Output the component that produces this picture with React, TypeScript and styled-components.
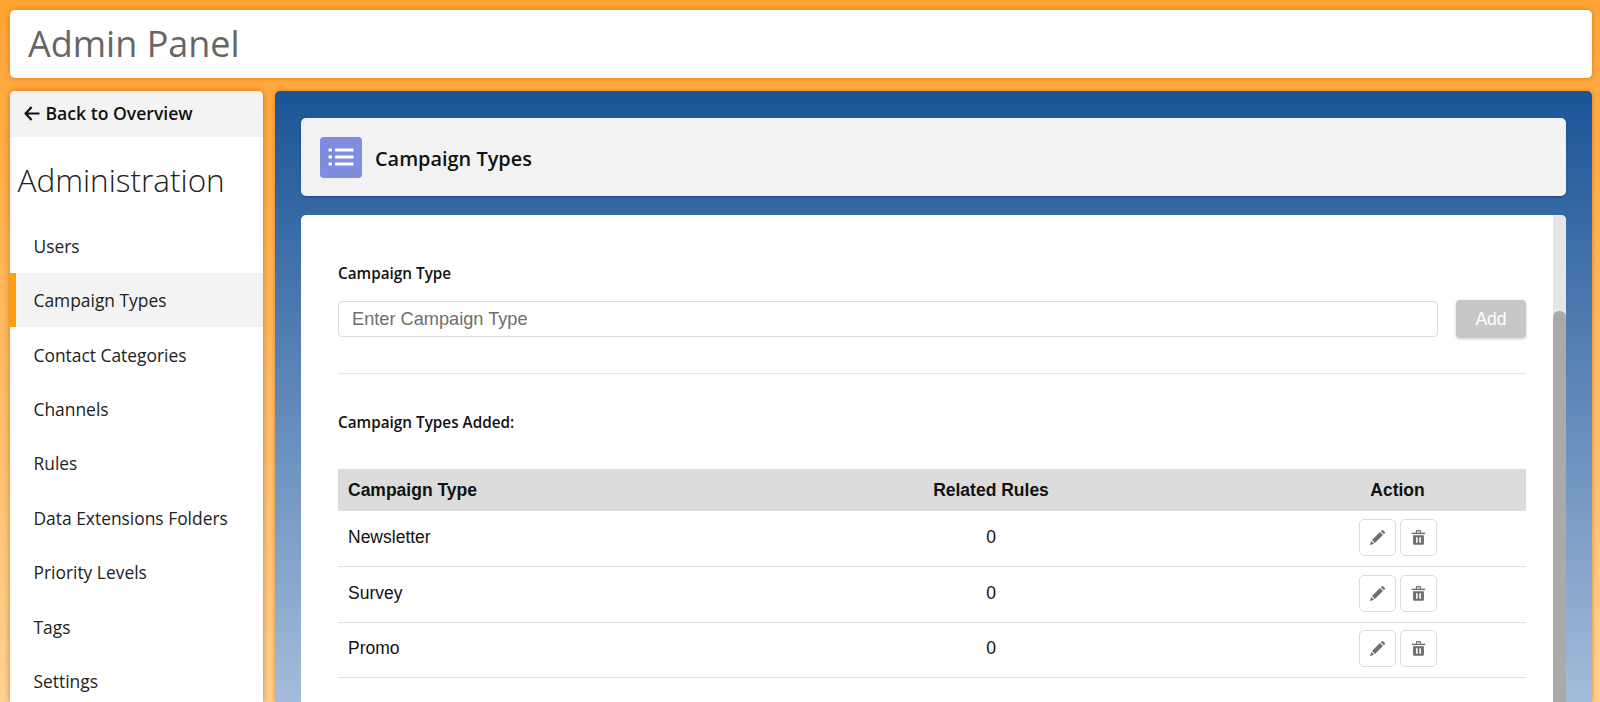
import React from 'react';
import styled, { createGlobalStyle } from 'styled-components';

const navItems = [
    'Users',
    'Campaign Types',
    'Contact Categories',
    'Channels',
    'Rules',
    'Data Extensions Folders',
    'Priority Levels',
    'Tags',
    'Settings',
];

const campaignTypes = ['Newsletter', 'Survey', 'Promo'];

const PencilIcon = () => (
    <svg width="17" height="17" viewBox="0 0 16 16" fill="#706e6b">
        <path d="M10.3 2.9 L13.1 5.7 L5.6 13.2 L2.8 10.4 Z" />
        <path d="M11.1 2.1 L12.1 1.1 Q12.7 0.7 13.2 1.1 L14.9 2.8 Q15.3 3.3 14.9 3.9 L13.9 4.9 Z" />
        <path d="M2.2 11.2 L4.8 13.8 L1.2 15 Q0.8 15 1 14.6 Z" />
    </svg>
);

const TrashIcon = () => (
    <svg width="17" height="17" viewBox="0 0 16 16" fill="#706e6b">
        <path d="M1.7 3.4 H14.3 V4.8 H1.7 Z" />
        <path d="M5.6 3.6 V1.8 Q5.6 0.9 6.6 0.9 H9.4 Q10.4 0.9 10.4 1.8 V3.6 H9.2 V2.1 H6.8 V3.6 Z" />
        <path
            fillRule="evenodd"
            d="M2.9 5.9 H13.1 V13.6 Q13.1 14.9 11.9 14.9 H4.1 Q2.9 14.9 2.9 13.6 Z M5.7 7.8 V13 H7.2 V7.8 Z M8.8 7.8 V13 H10.3 V7.8 Z"
        />
    </svg>
);

const ListIcon = () => (
    <svg width="26" height="20" viewBox="0 0 26 20" fill="#fff">
        <rect x="0.5" y="1.5" width="3.4" height="3" rx="0.8" />
        <rect x="0.5" y="8.5" width="3.4" height="3" rx="0.8" />
        <rect x="0.5" y="15.5" width="3.4" height="3" rx="0.8" />
        <rect x="7" y="1.5" width="18.5" height="3" rx="0.8" />
        <rect x="7" y="8.5" width="18.5" height="3" rx="0.8" />
        <rect x="7" y="15.5" width="18.5" height="3" rx="0.8" />
    </svg>
);

export default function App() {
    return (
        <>
            <GlobalStyle />
            <Page>
                <Header>
                    <AppTitle>Admin Panel</AppTitle>
                </Header>
                <Body>
                    <Sidebar>
                        <BackLink>
                            <BackArrow width="16" height="15" viewBox="0 0 16 15">
                                <path d="M7.6 1 L1.6 7.5 L7.6 14 M1.8 7.5 H15.5" fill="none" stroke="#111" strokeWidth="2.2" />
                            </BackArrow>
                            Back to Overview
                        </BackLink>
                        <SideTitle>Administration</SideTitle>
                        <Nav>
                            {navItems.map((item) => (
                                <NavItem key={item} $active={item === 'Campaign Types'}>
                                    {item}
                                </NavItem>
                            ))}
                        </Nav>
                    </Sidebar>
                    <Main>
                        <PageHead>
                            <IconTile>
                                <ListIcon />
                            </IconTile>
                            <PageTitle>Campaign Types</PageTitle>
                        </PageHead>
                        <Card>
                            <CardBody>
                                <FieldLabel>Campaign Type</FieldLabel>
                                <FieldRow>
                                    <TextInput placeholder="Enter Campaign Type" />
                                    <AddButton disabled>Add</AddButton>
                                </FieldRow>
                                <Divider />
                                <ListLabel>Campaign Types Added:</ListLabel>
                                <Table>
                                    <colgroup>
                                        <col width="375" />
                                        <col width="556" />
                                        <col width="257" />
                                    </colgroup>
                                    <thead>
                                        <tr>
                                            <HeadCell $align="left">Campaign Type</HeadCell>
                                            <HeadCell $align="center">Related Rules</HeadCell>
                                            <HeadCell $align="center">Action</HeadCell>
                                        </tr>
                                    </thead>
                                    <tbody>
                                        {campaignTypes.map((name) => (
                                            <tr key={name}>
                                                <Cell $align="left">{name}</Cell>
                                                <Cell $align="center">0</Cell>
                                                <Cell $align="center">
                                                    <Actions>
                                                        <IconButton aria-label="Edit">
                                                            <PencilIcon />
                                                        </IconButton>
                                                        <IconButton aria-label="Delete">
                                                            <TrashIcon />
                                                        </IconButton>
                                                    </Actions>
                                                </Cell>
                                            </tr>
                                        ))}
                                    </tbody>
                                </Table>
                            </CardBody>
                            <ScrollTrack>
                                <ScrollThumb />
                            </ScrollTrack>
                        </Card>
                    </Main>
                </Body>
            </Page>
        </>
    );
}

const GlobalStyle = createGlobalStyle`
    html, body {
        margin: 0;
        height: 100%;
        overflow: hidden;
    }

    * {
        box-sizing: border-box;
    }
`;

const Page = styled.div`
    background: linear-gradient(#ffa433, #ffd292);
    display: flex;
    flex-direction: column;
    font-family: 'Open Sans', sans-serif;
    gap: 13px;
    height: 702px;
    overflow: hidden;
    padding: 10px 8px 0 9.5px;
    width: 1600px;
`;

const Header = styled.header`
    align-items: center;
    background: #fff;
    border-radius: 5px;
    box-shadow: 0 0 5px rgba(190, 90, 0, 0.6);
    display: flex;
    flex: 0 0 68px;
    padding: 0 0 1px 18.5px;
`;

const AppTitle = styled.h1`
    color: #666;
    font-size: 36px;
    font-weight: 400;
    margin: 0;
`;

const Body = styled.div`
    display: flex;
    flex: 1;
    gap: 12px;
    min-height: 0;
`;

const Sidebar = styled.aside`
    background: #fff;
    border-radius: 5px 5px 0 0;
    box-shadow: 0 0 6px rgba(190, 90, 0, 0.7);
    display: flex;
    flex: 0 0 253.5px;
    flex-direction: column;
`;

const BackLink = styled.div`
    align-items: center;
    background: #f3f3f3;
    border-radius: 5px 5px 0 0;
    color: #111;
    display: flex;
    flex: 0 0 46px;
    font-size: 17.6px;
    font-weight: 600;
    gap: 6px;
    padding: 0 0 2px 14px;
`;

const BackArrow = styled.svg`
    flex: none;
`;

const SideTitle = styled.h2`
    color: #222;
    font-size: 31.5px;
    font-weight: 300;
    line-height: 40px;
    margin: 0;
    padding: 23px 0 18.6px 8px;
`;

const Nav = styled.nav`
    display: flex;
    flex-direction: column;
`;

const NavItem = styled.div<{ $active?: boolean }>`
    align-items: center;
    background: ${({ $active }) => ($active ? '#f3f3f3' : 'transparent')};
    border-left: 6px solid ${({ $active }) => ($active ? '#ff9e0f' : 'transparent')};
    color: #222;
    display: flex;
    flex: 0 0 54.4px;
    font-size: 17.4px;
    padding-left: 18px;
`;

const Main = styled.main`
    background: linear-gradient(#1a5496, #a4bcdb);
    border-radius: 5px 5px 0 0;
    box-shadow: 0 0 5px rgba(190, 90, 0, 0.6);
    display: flex;
    flex: 1;
    flex-direction: column;
    gap: 19px;
    padding: 27px 26px 0;
`;

const PageHead = styled.div`
    align-items: center;
    background: #f2f2f2;
    border-radius: 5px;
    box-shadow: 0 1px 2px rgba(10, 40, 80, 0.5);
    display: flex;
    flex: 0 0 78px;
    gap: 13px;
    padding-left: 19px;
`;

const IconTile = styled.div`
    align-items: center;
    background: #7f8de1;
    border-radius: 4px;
    display: flex;
    height: 41px;
    justify-content: center;
    width: 42px;
`;

const PageTitle = styled.h3`
    color: #111;
    font-size: 19.9px;
    font-weight: 600;
    margin: 2px 0 0;
`;

const Card = styled.section`
    background: #fff;
    border-radius: 5px 5px 0 0;
    display: flex;
    flex: 1;
    min-height: 0;
    overflow: hidden;
`;

const CardBody = styled.div`
    flex: 1;
    padding: 48px 27px 0 37px;
`;

const ScrollTrack = styled.div`
    background: #e6e6e6;
    flex: 0 0 13px;
    padding-top: 96px;
`;

const ScrollThumb = styled.div`
    background: #aaa;
    border-radius: 6px 6px 0 0;
    height: 100%;
`;

const FieldLabel = styled.div`
    color: #111;
    font-size: 15.3px;
    font-weight: 600;
    line-height: 20px;
    margin-bottom: 17px;
`;

const FieldRow = styled.div`
    align-items: center;
    display: flex;
    gap: 18px;
`;

const TextInput = styled.input`
    background: #fff;
    border: 1px solid #dddbda;
    border-radius: 4px;
    flex: 1;
    font-family: 'Liberation Sans', sans-serif;
    font-size: 18.2px;
    height: 36px;
    outline: none;
    padding: 0 13px;

    &::placeholder {
        color: #706e6b;
        opacity: 1;
    }
`;

const AddButton = styled.button`
    background: #c9c7c5;
    border: none;
    border-radius: 4px;
    box-shadow: 0 1px 3px rgba(0, 0, 0, 0.2);
    color: #fff;
    flex: 0 0 70px;
    font-family: 'Liberation Sans', sans-serif;
    font-size: 17.5px;
    height: 38px;
`;

const Divider = styled.hr`
    border: none;
    border-top: 1px solid #e5e5e5;
    margin: 35px 0 38px;
`;

const ListLabel = styled.div`
    color: #111;
    font-size: 15.3px;
    font-weight: 600;
    line-height: 20px;
    margin-bottom: 37px;
`;

const Table = styled.table`
    border-collapse: collapse;
    font-family: 'Liberation Sans', sans-serif;
    table-layout: fixed;
    width: 100%;
`;

const HeadCell = styled.th<{ $align: string }>`
    background: #dcdcdc;
    color: #111;
    font-size: 17.5px;
    font-weight: 700;
    height: 42px;
    padding: 0 10px;
    text-align: ${({ $align }) => $align};
`;

const Cell = styled.td<{ $align: string }>`
    border-bottom: 1px solid #e0e0e0;
    color: #111;
    font-size: 17.5px;
    height: 55.5px;
    padding: 0 10px 2px;
    text-align: ${({ $align }) => $align};
`;

const Actions = styled.div`
    display: flex;
    gap: 4px;
    justify-content: center;
`;

const IconButton = styled.button`
    align-items: center;
    background: #fff;
    border: 1px solid #dddbda;
    border-radius: 5px;
    display: flex;
    height: 37px;
    justify-content: center;
    padding: 0;
    width: 37px;
`;
